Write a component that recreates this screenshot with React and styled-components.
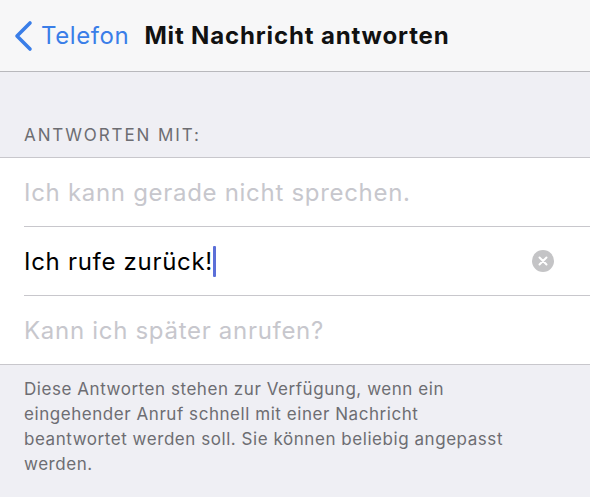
import React from "react"
import styled, { createGlobalStyle } from "styled-components"

const GlobalStyle = createGlobalStyle`
  html, body {
    margin: 0;
    padding: 0;
    background: #efeff4;
  }
  body {
    font-family: Inter, "Noto Sans", sans-serif;
    -webkit-font-smoothing: antialiased;
  }
`

const Screen = styled.div`
  width: 590px;
  height: 497px;
  overflow: hidden;
  background: #efeff4;
`

const NavBar = styled.div`
  height: 71px;
  background: #f7f7f8;
  border-bottom: 1px solid #b8b8bc;
  display: flex;
  align-items: center;
  padding: 0 0 0 14px;
`

const BackButton = styled.div`
  display: flex;
  align-items: center;
  gap: 8px;
  color: #3a7ee8;
  font-size: 24px;
  letter-spacing: 0.6px;
`

const Title = styled.div`
  margin-left: 15px;
  font-size: 24px;
  font-weight: 700;
  color: #111;
  letter-spacing: 0.85px;
`

const SectionHeader = styled.div`
  padding: 53px 24px 12px;
  font-size: 17px;
  line-height: 20px;
  color: #6d6d72;
  letter-spacing: 1.9px;
`

const Group = styled.div`
  background: #fff;
  border-top: 1px solid #c8c7cc;
  border-bottom: 1px solid #c8c7cc;
`

const Row = styled.div`
  height: 68px;
  margin-left: 24px;
  padding-right: 36px;
  display: flex;
  align-items: center;
  border-bottom: ${p => (p.$last ? "none" : "1px solid #c8c7cc")};
  font-size: 24px;
  letter-spacing: 0.7px;
  color: ${p => (p.$placeholder ? "#c7c7cd" : "#000")};
`

const Text = styled.span`
  flex: 1;
  display: flex;
  align-items: center;
`

const Cursor = styled.span`
  display: inline-block;
  width: 3px;
  height: 31px;
  background: #5b6fd8;
  border-radius: 1px;
`

const ClearButton = styled.div`
  width: 22px;
  height: 22px;
  border-radius: 50%;
  background: #c4c4c6;
  display: flex;
  align-items: center;
  justify-content: center;
`

const Footer = styled.div`
  padding: 12px 24px;
  font-size: 17px;
  line-height: 25px;
  letter-spacing: 0.55px;
  color: #6d6d72;
`

const replies = [
  { text: "Ich kann gerade nicht sprechen.", placeholder: true },
  { text: "Ich rufe zurück!", active: true },
  { text: "Kann ich später anrufen?", placeholder: true },
]

export default function App() {
  return (
    <Screen>
      <GlobalStyle />
      <NavBar>
        <BackButton>
          <svg width="19" height="32" viewBox="0 0 19 32">
            <path
              d="M16 3 L3 16 L16 29"
              fill="none"
              stroke="#3a7ee8"
              strokeWidth="3.6"
              strokeLinecap="round"
              strokeLinejoin="round"
            />
          </svg>
          Telefon
        </BackButton>
        <Title>Mit Nachricht antworten</Title>
      </NavBar>
      <SectionHeader>ANTWORTEN MIT:</SectionHeader>
      <Group>
        {replies.map((r, i) => (
          <Row key={i} $placeholder={r.placeholder} $last={i === replies.length - 1}>
            <Text>
              {r.text}
              {r.active && <Cursor />}
            </Text>
            {r.active && (
              <ClearButton>
                <svg width="10" height="10" viewBox="0 0 10 10">
                  <path d="M1.5 1.5 L8.5 8.5 M8.5 1.5 L1.5 8.5" stroke="#fff" strokeWidth="2" strokeLinecap="round" />
                </svg>
              </ClearButton>
            )}
          </Row>
        ))}
      </Group>
      <Footer>
        Diese Antworten stehen zur Verfügung, wenn ein
        <br />
        eingehender Anruf schnell mit einer Nachricht
        <br />
        beantwortet werden soll. Sie können beliebig angepasst
        <br />
        werden.
      </Footer>
    </Screen>
  )
}
